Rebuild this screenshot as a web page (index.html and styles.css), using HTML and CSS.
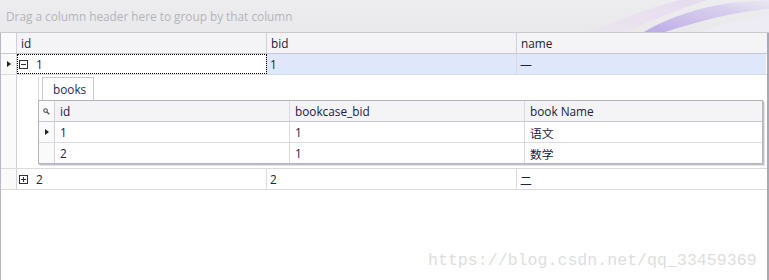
FILE: index.html
```html
<!DOCTYPE html>
<html lang="en">
<head>
    <meta charset="UTF-8">
    <title>Master-detail grid</title>
    <link rel="stylesheet" href="styles.css">
</head>
<body>
    <div class="view">
        <!-- group panel -->
        <div class="group-panel">
            <span class="group-hint">Drag a column header here to group by that column</span>
            <svg class="swoosh" width="180" height="32" viewBox="0 0 180 32">
                <defs>
                    <linearGradient id="g1" x1="0" y1="1" x2="1" y2="0">
                        <stop offset="0" stop-color="#ead8ee" stop-opacity="0.2"/>
                        <stop offset="1" stop-color="#e4d6f0" stop-opacity="0.8"/>
                    </linearGradient>
                    <linearGradient id="g2" x1="0" y1="1" x2="1" y2="0">
                        <stop offset="0" stop-color="#b7a4e4" stop-opacity="0.9"/>
                        <stop offset="0.7" stop-color="#cbbdee" stop-opacity="0.6"/>
                        <stop offset="1" stop-color="#e2dbf4" stop-opacity="0.3"/>
                    </linearGradient>
                </defs>
                <path d="M0 32 C30 20 60 8 90 0 L118 0 C88 10 58 22 38 32 Z" fill="url(#g1)"/>
                <path d="M55 32 C75 20 110 6 150 2 L180 0 L180 9 C150 11 112 20 76 32 Z" fill="url(#g2)"/>
                <path d="M112 32 C132 24 160 17 180 15 L180 32 Z" fill="#eeebf5" opacity="0.8"/>
            </svg>
        </div>

        <div class="grid">
            <div class="row head">
                <div class="ind"></div>
                <div class="cell">id</div>
                <div class="cell">bid</div>
                <div class="cell last">name</div>
            </div>

            <div class="row selected">
                <div class="ind"><span class="arrow"></span></div>
                <div class="cell focused"><span class="expander minus"></span>1</div>
                <div class="cell">1</div>
                <div class="cell last">一</div>
            </div>

            <div class="detail-row">
                <div class="ind"></div>
                <div class="detail">
                    <div class="tabs"><div class="tab">books</div></div>
                    <div class="sub">
                        <div class="sub-row sub-head">
                            <div class="sub-ind">
                                <svg width="7" height="7" viewBox="0 0 7 7"><circle cx="2.6" cy="2.6" r="1.8" fill="none" stroke="#555" stroke-width="1.1"/><path d="M3.9 3.9 L6.3 6.3" stroke="#555" stroke-width="1.4"/></svg>
                            </div>
                            <div class="sub-cell">id</div>
                            <div class="sub-cell">bookcase_bid</div>
                            <div class="sub-cell last">book Name</div>
                        </div>
                        <div class="sub-row">
                            <div class="sub-ind"><span class="arrow"></span></div>
                            <div class="sub-cell">1</div>
                            <div class="sub-cell">1</div>
                            <div class="sub-cell last">语文</div>
                        </div>
                        <div class="sub-row">
                            <div class="sub-ind"></div>
                            <div class="sub-cell">2</div>
                            <div class="sub-cell">1</div>
                            <div class="sub-cell last">数学</div>
                        </div>
                    </div>
                </div>
            </div>

            <div class="row">
                <div class="ind"></div>
                <div class="cell"><span class="expander plus"></span>2</div>
                <div class="cell">2</div>
                <div class="cell last">二</div>
            </div>

            <div class="empty">
                <span class="watermark">https://blog.csdn.net/qq_33459369</span>
            </div>
        </div>
    </div>
</body>
</html>
```

FILE: styles.css
```css
body {
    margin: 0;
    padding: 0;
    background: #fff;
    font-family: "Open Sans", "Noto Sans CJK SC", sans-serif;
    font-size: 11.8px;
    color: #202040;
}

.view {
    width: 769px;
    height: 280px;
    overflow: hidden;
    display: flex;
    flex-direction: column;
}

/* group panel */
.group-panel {
    position: relative;
    height: 32px;
    border-bottom: 1px solid #c9c9d1;
    background: linear-gradient(#ededf0, #e9e9ec);
    display: flex;
    align-items: center;
    padding-left: 6px;
}

.group-hint {
    color: #b4b4ba;
}

.swoosh {
    position: absolute;
    right: 0;
    top: 0;
}

/* main grid */
.grid {
    flex: 1;
    display: flex;
    flex-direction: column;
    border-left: 1px solid #b8b8c2;
    border-right: 2px solid #a8a8b2;
}

.row {
    display: flex;
    height: 20px;
    border-bottom: 1px solid #dadae0;
}

.row.head {
    background: #f4f4f6;
    border-bottom-color: #c8c8d0;
}

.ind {
    width: 15px;
    flex: none;
    border-right: 1px solid #d0d0d8;
    display: flex;
    align-items: center;
    justify-content: center;
    background: #fafafb;
}

.cell {
    flex: none;
    border-right: 1px solid #dadae0;
    display: flex;
    align-items: center;
    padding-left: 3px;
    box-sizing: border-box;
    width: 250px;
}

.row.head .cell {
    padding-left: 4px;
    border-right-color: #d0d0d8;
}

.cell.last {
    border-right: none;
    width: 249px;
}

.row.selected .cell {
    background: #dfe7fb;
}

.row.selected .cell.focused {
    background: #fff;
    outline: 1px dotted #000;
    outline-offset: -1px;
}

.arrow {
    width: 0;
    height: 0;
    border-top: 3.5px solid transparent;
    border-bottom: 3.5px solid transparent;
    border-left: 4px solid #222;
    margin-left: 1px;
}

.expander {
    position: relative;
    width: 9px;
    height: 9px;
    border: 1px solid #333;
    box-sizing: border-box;
    margin-right: 8px;
    margin-left: -1px;
    flex: none;
}

.expander::before,
.expander::after {
    content: "";
    position: absolute;
    background: #333;
}

.expander::before {
    left: 1px;
    right: 1px;
    top: 3px;
    height: 1px;
}

.expander.plus::after {
    top: 1px;
    bottom: 1px;
    left: 3px;
    width: 1px;
}

/* detail */
.detail-row {
    display: flex;
    height: 93px;
    border-bottom: 1px solid #dadae0;
}

.detail {
    flex: 1;
    padding-left: 21px;
    padding-top: 2px;
}

.tabs {
    display: flex;
    padding-left: 3px;
    height: 23px;
    border-left: 1px solid #d8d8de;
}

.tab {
    width: 52px;
    border: 1px solid #c8c8d0;
    border-bottom: none;
    background: #fff;
    padding-left: 10px;
    padding-top: 3px;
    box-sizing: border-box;
    color: #1c2a50;
}

.sub {
    width: 723px;
    border: 1px solid #b4b4be;
    box-shadow: 1px 1px 0 #c0c0c8, 2px 2px 0 #e2e2e6;
}

.sub-row {
    display: flex;
    height: 20px;
    border-bottom: 1px solid #dadae0;
}

.sub-row:last-child {
    border-bottom: none;
}

.sub-head {
    background: #f4f4f6;
    border-bottom-color: #c8c8d0;
}

.sub-ind {
    width: 16px;
    flex: none;
    box-sizing: border-box;
    border-right: 1px solid #d0d0d8;
    display: flex;
    align-items: center;
    justify-content: center;
    background: #fafafb;
}

.sub-cell {
    width: 235px;
    flex: none;
    box-sizing: border-box;
    border-right: 1px solid #dadae0;
    padding-left: 5px;
    display: flex;
    align-items: center;
}

.sub-cell.last {
    width: 235px;
    border-right: none;
}

.empty {
    flex: 1;
    position: relative;
}

.watermark {
    position: absolute;
    left: 427px;
    top: 61px;
    font-family: "Liberation Mono", monospace;
    font-size: 16.6px;
    color: #dedede;
}
```
